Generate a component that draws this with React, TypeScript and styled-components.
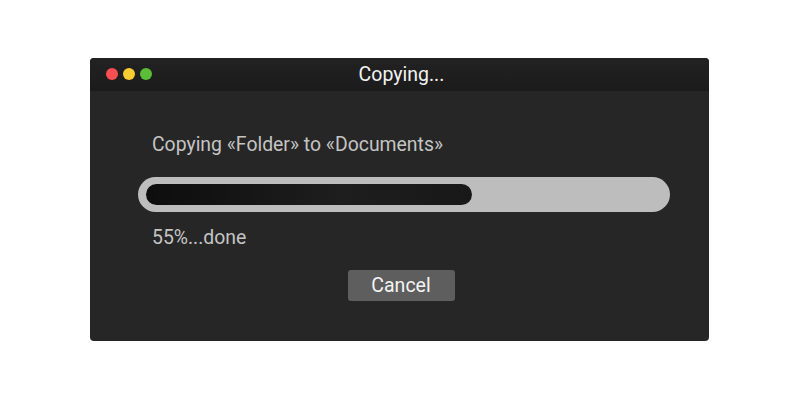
import React from "react";
import styled, { createGlobalStyle } from "styled-components";

const GlobalStyle = createGlobalStyle`
  body {
    margin: 0;
    background: #ffffff;
    font-family: Roboto, "Liberation Sans", sans-serif;
  }
`;

const Window = styled.div`
  width: 619px;
  height: 283px;
  margin: 58px 0 0 90px;
  background: #262626;
  border-radius: 4px;
  overflow: hidden;
  display: flex;
  flex-direction: column;
`;

const TitleBar = styled.div`
  position: relative;
  height: 33px;
  background: linear-gradient(#222222, #1b1b1b);
  display: flex;
  align-items: center;
  justify-content: center;
`;

const Lights = styled.div`
  position: absolute;
  left: 16px;
  top: 10px;
  display: flex;
  gap: 5px;
`;

const Light = styled.span<{ $color: string }>`
  width: 12px;
  height: 12px;
  border-radius: 50%;
  background: ${(p) => p.$color};
`;

const Title = styled.div`
  color: #f2f2f2;
  font-size: 19.5px;
  margin-left: 4px;
`;

const Body = styled.div`
  padding: 41px 39px 0 48px;
  display: flex;
  flex-direction: column;
`;

const Message = styled.div`
  color: #c4c4c4;
  font-size: 19.4px;
  margin-left: 14px;
  line-height: 25px;
`;

const Track = styled.div`
  margin-top: 20px;
  height: 35px;
  border-radius: 18px;
  background: #bdbdbd;
  padding: 7px 8px;
  box-sizing: border-box;
`;

const Fill = styled.div`
  height: 100%;
  border-radius: 11px;
  background: linear-gradient(90deg, #0d0d0d, #1e1e1e 60%, #181818);
`;

const Status = styled.div`
  color: #c4c4c4;
  font-size: 19.4px;
  margin: 13px 0 0 14px;
  line-height: 25px;
`;

const ButtonRow = styled.div`
  display: flex;
  justify-content: center;
  margin-top: 20px;
  padding-right: 6px;
`;

const CancelButton = styled.button`
  width: 107px;
  height: 31px;
  border: none;
  border-radius: 3px;
  background: #5e5e5e;
  color: #f4f4f4;
  font-family: Roboto, "Liberation Sans", sans-serif;
  font-size: 19.5px;
  padding: 0;
`;

export default function App() {
  const progress = 326 / 516;
  return (
    <>
      <GlobalStyle />
      <Window>
        <TitleBar>
          <Lights>
            <Light $color="#fb4f52" />
            <Light $color="#f7cd33" />
            <Light $color="#5bbd38" />
          </Lights>
          <Title>Copying...</Title>
        </TitleBar>
        <Body>
          <Message>Copying «Folder» to «Documents»</Message>
          <Track>
            <Fill style={{ width: `${progress * 100}%` }} />
          </Track>
          <Status>55%...done</Status>
          <ButtonRow>
            <CancelButton>Cancel</CancelButton>
          </ButtonRow>
        </Body>
      </Window>
    </>
  );
}
